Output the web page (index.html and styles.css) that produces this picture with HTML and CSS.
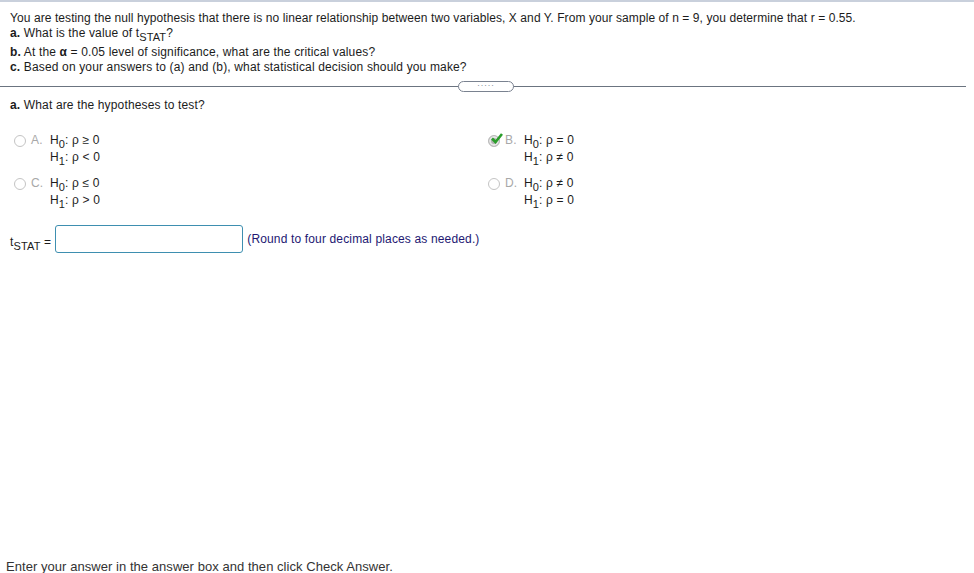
FILE: index.html
```html
<!DOCTYPE html>
<html>
<head>
<meta charset="utf-8">
<link rel="stylesheet" href="styles.css">
</head>
<body>
<div class="page">
  <div class="question">
    <p class="l1">You are testing the null hypothesis that there is no linear relationship between two variables, X and Y. From your sample of n = 9, you determine that r = 0.55.</p>
    <p class="l2"><b>a.</b> What is the value of t<sub>STAT</sub>?</p>
    <p class="l3"><b>b.</b> At the <span class="alpha">α</span> = 0.05 level of significance, what are the critical values?</p>
    <p class="l4"><b>c.</b> Based on your answers to (a) and (b), what statistical decision should you make?</p>
  </div>
  <div class="divider">
    <span class="pill">.....</span>
  </div>
  <p class="sub"><b>a.</b> What are the hypotheses to test?</p>
  <div class="options">
    <div class="opt">
      <span class="radio"></span><span class="letter">A.</span>
      <div class="hyp"><div>H<sub>0</sub>: ρ ≥ 0</div><div>H<sub>1</sub>: ρ &lt; 0</div></div>
    </div>
    <div class="opt">
      <span class="radio checked"><svg class="tick" width="12" height="11" viewBox="0 0 12 11"><path d="M1 5.5 L4.5 9 L11 1" fill="none" stroke="#2a9d2a" stroke-width="2.6"/></svg></span><span class="letter">B.</span>
      <div class="hyp"><div>H<sub>0</sub>: ρ = 0</div><div>H<sub>1</sub>: ρ ≠ 0</div></div>
    </div>
    <div class="opt">
      <span class="radio"></span><span class="letter">C.</span>
      <div class="hyp"><div>H<sub>0</sub>: ρ ≤ 0</div><div>H<sub>1</sub>: ρ &gt; 0</div></div>
    </div>
    <div class="opt">
      <span class="radio"></span><span class="letter">D.</span>
      <div class="hyp"><div>H<sub>0</sub>: ρ ≠ 0</div><div>H<sub>1</sub>: ρ = 0</div></div>
    </div>
  </div>
  <div class="answer">
    <span class="tlabel">t<sub>STAT</sub> =</span>
    <span class="box"></span>
    <span class="hint">(Round to four decimal places as needed.)</span>
  </div>
</div>
<div class="footer">Enter your answer in the answer box and then click Check Answer.</div>
</body>
</html>
```
FILE: styles.css
```css
html, body {
  margin: 0;
  padding: 0;
  height: 573px;
  overflow: hidden;
  background: #fff;
}
body {
  font-family: "Liberation Sans", Arial, sans-serif;
  font-size: 12px;
  color: #1c1c1c;
  border-top: 2px solid #c9d0dc;
  box-sizing: border-box;
  position: relative;
}
.page { letter-spacing: 0.15px; }
p { margin: 0; }
sub { font-size: 11px; vertical-align: -4px; line-height: 0; }
.question { padding: 9px 0 0 10px; }
.l1 { line-height: 15px; letter-spacing: 0.08px; }
.l2 { line-height: 15px; }
.l3 { line-height: 15px; margin-top: 4px; }
.l4 { line-height: 15px; }
.alpha { font-weight: bold; }
.divider {
  margin-top: 5px;
  height: 12px;
  position: relative;
  margin-right: 8px;
}
.divider::before {
  content: "";
  position: absolute;
  left: 0; right: 0; top: 6px;
  border-top: 1px solid #6b7480;
}
.pill {
  position: absolute;
  left: 458px;
  top: 1px;
  width: 54px;
  height: 9px;
  border: 1px solid #7a8290;
  border-radius: 6px;
  background: #fff;
  font-size: 9px;
  line-height: 3px;
  color: #8a92a0;
  text-align: center;
  letter-spacing: 1px;
  box-sizing: content-box;
}
.sub { padding: 6px 0 0 10px; line-height: 15px; }
.options {
  display: grid;
  grid-template-columns: 474px 300px;
  row-gap: 10px;
  padding: 20px 0 0 14px;
}
.opt { display: flex; align-items: flex-start; }
.radio {
  width: 10px; height: 10px;
  border: 1px solid #c4c4c4;
  border-radius: 50%;
  margin-top: 2px;
  position: relative;
  flex: none;
}
.radio.checked { background: #b0b0b0; box-shadow: inset 0 0 0 2px #e6e6e6; border-color: #bbb; }
.tick { position: absolute; left: 2px; top: -3px; }
.letter { color: #a8a8a8; width: 19px; padding-left: 5px; }
.hyp { line-height: 17px; margin-top: -1px; }
.answer {
  display: flex;
  align-items: center;
  padding: 16px 0 0 10px;
}
.tlabel { padding-top: 5px; }
.box {
  width: 186px; height: 26px;
  border: 1px solid #3e8fb0;
  border-radius: 3px;
  margin-left: 4px;
}
.hint { color: #231872; margin-left: 4px; }
.footer {
  position: absolute;
  left: 6px;
  top: 557px;
  font-size: 13px;
  color: #333;
  letter-spacing: 0.05px;
}
```
